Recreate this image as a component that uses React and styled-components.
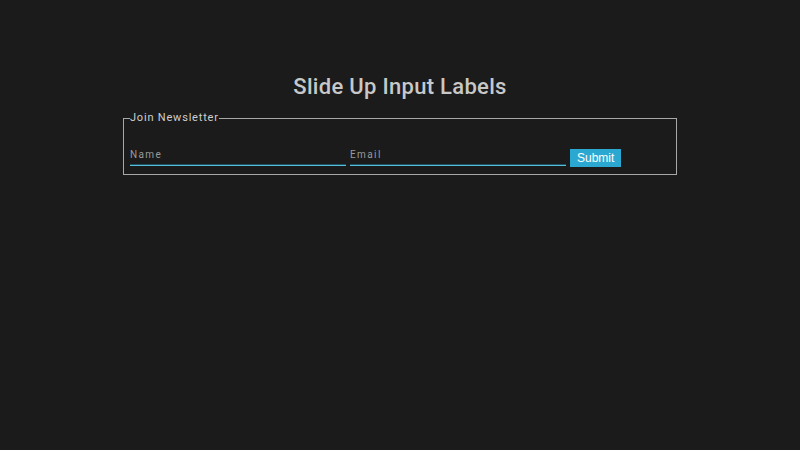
import React from 'react'
import styled, { createGlobalStyle } from 'styled-components';

const GlobalStyle = createGlobalStyle`
  body {
    margin: 0;
    background: #1b1b1b;
    font-family: Roboto, "Liberation Sans", sans-serif;
  }
`;

const Page = styled.div`
  padding-top: 74px;
`;

const Title = styled.h1`
  margin: 0 0 11px;
  text-align: center;
  font-size: 22px;
  font-weight: 500;
  letter-spacing: 0.3px;
  line-height: 26px;
  color: #c8c8c8;
`;

const Fieldset = styled.fieldset`
  width: 540px;
  margin: 0 auto;
  padding: 0 6px 8px;
  border: 1px solid #a8a8a8;
`;

const Legend = styled.legend`
  padding: 0;
  font-size: 11px;
  line-height: 14px;
  letter-spacing: 0.8px;
  color: #cfcfcf;
`;

const Row = styled.div`
  display: flex;
  align-items: flex-end;
  gap: 4px;
  padding-top: 17px;
`;

const Field = styled.label`
  position: relative;
  display: block;
  width: 216px;
`;

const Input = styled.input`
  display: block;
  width: 100%;
  box-sizing: border-box;
  height: 24px;
  padding: 8px 0 0;
  background: transparent;
  border: none;
  border-bottom: 1px solid #55bfd9;
  box-shadow: 0 -1px 0 #1f4f60 inset;
  color: #ddd;
  outline: none;
  font: inherit;
  font-size: 11px;
`;

const FloatLabel = styled.span`
  position: absolute;
  left: 0;
  top: 7px;
  font-size: 10px;
  letter-spacing: 1.4px;
  color: #9a9a9a;
  pointer-events: none;
`;

const Button = styled.button`
  height: 18px;
  padding: 0 7px;
  margin-bottom: -1px;
  border: none;
  background: #2ba8d2;
  color: #fff;
  font-family: "Liberation Sans", Arial, sans-serif;
  font-size: 12px;
  line-height: 18px;
`;

function App() {
  return (
    <Page>
      <GlobalStyle />
      <Title>Slide Up Input Labels</Title>
      <Fieldset>
        <Legend>Join Newsletter</Legend>
        <Row>
          <Field>
            <Input type="text" />
            <FloatLabel>Name</FloatLabel>
          </Field>
          <Field>
            <Input type="email" />
            <FloatLabel>Email</FloatLabel>
          </Field>
          <Button>Submit</Button>
        </Row>
      </Fieldset>
    </Page>
  )
}

export default App
